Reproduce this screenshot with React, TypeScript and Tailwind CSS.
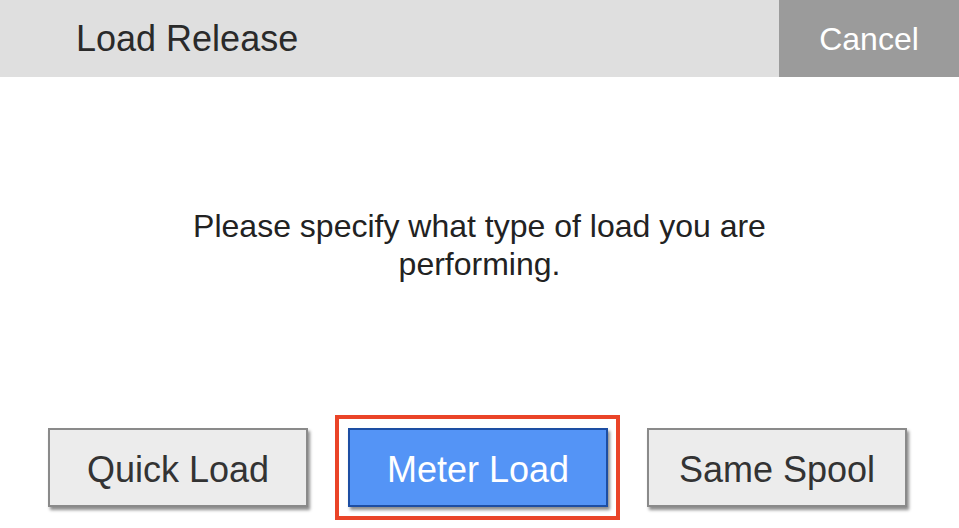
import React from "react";

export default function App() {
  return (
    <div className="w-[959px] h-[528px] bg-white flex flex-col overflow-hidden" style={{ fontFamily: '"Liberation Sans", Arial, sans-serif' }}>
      <div className="h-[77px] flex bg-[#dfdfdf]">
        <div className="flex-1 flex items-center pl-[76px] text-[36px] text-[#2a2a2a]">Load Release</div>
        <div className="w-[180px] bg-[#9b9b9b] flex items-center justify-center text-[32px] text-white">Cancel</div>
      </div>
      <div className="mt-[130px] flex justify-center">
        <p className="max-w-[680px] text-center text-[32px] leading-[38px] text-[#222]">
          Please specify what type of load you are performing.
        </p>
      </div>
      <div className="mt-[132px] flex items-start pl-[48px] gap-[27px]">
        <button className="mt-[13px] w-[260px] h-[79px] pt-[4px] bg-[#ececec] border-2 border-[#8a8a8a] shadow-[2px_3px_3px_rgba(0,0,0,0.45)] text-[36px] text-[#333]">
          Quick Load
        </button>
        <div className="w-[285px] h-[105px] border-4 border-[#ea4428] pt-[9px] pl-[9px]">
          <button className="w-[260px] h-[79px] pt-[4px] bg-[#5494f6] border-2 border-[#1d4ea3] shadow-[2px_3px_3px_rgba(0,0,0,0.45)] text-[36px] text-white">
            Meter Load
          </button>
        </div>
        <button className="mt-[13px] w-[260px] h-[79px] pt-[4px] bg-[#ececec] border-2 border-[#8a8a8a] shadow-[2px_3px_3px_rgba(0,0,0,0.45)] text-[36px] text-[#333]">
          Same Spool
        </button>
      </div>
    </div>
  );
}
